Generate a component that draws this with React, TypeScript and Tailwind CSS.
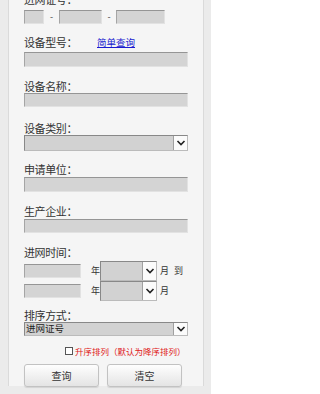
import React from "react";

const font = { fontFamily: '"Noto Sans CJK SC", "Noto Sans", sans-serif' };

const Chevron = () => (
  <svg width="10" height="8" viewBox="0 0 10 8">
    <polyline points="1.5,2 5,5.5 8.5,2" fill="none" stroke="#222" strokeWidth="1.6" />
  </svg>
);

const TextInput = ({ className }: { className: string }) => (
  <div
    className={`bg-[#d4d4d4] border border-t-[#959595] border-l-[#a5a5a5] border-b-[#e2e2e2] border-r-[#e2e2e2] ${className}`}
  />
);

const Select = ({ className, text }: { className: string; text?: string }) => (
  <div
    className={`flex bg-[#d2d2d2] border border-t-[#888] border-l-[#888] border-b-[#bbb] border-r-[#bbb] ${className}`}
  >
    <div className="flex-1 flex items-center pl-[1px] text-[9.5px] text-[#222] leading-none">{text}</div>
    <div className="w-[14px] flex items-center justify-center bg-[#fbfbfb] border-l border-[#a0a0a0]">
      <Chevron />
    </div>
  </div>
);

const Label = ({ children, className }: { children: React.ReactNode; className: string }) => (
  <div className={`h-[14px] leading-[14px] text-[11px] tracking-[-0.4px] text-[#333] ${className}`}>{children}</div>
);

export default function App() {
  return (
    <div className="w-[211px] h-[394px] overflow-hidden bg-[#ebebeb]" style={font}>
      <div className="ml-[8px] w-[196px] h-full border-x border-[#dadada] bg-[#f5f5f5] pl-[15px]">
        <Label className="-mt-[8px]">进网证号：</Label>

        <div className="mt-[4px] flex items-center h-[14px]">
          <TextInput className="w-[20px] h-[14px]" />
          <span className="w-[15px] text-center text-[9px] text-[#444]">-</span>
          <TextInput className="w-[43px] h-[14px]" />
          <span className="w-[14px] text-center text-[9px] text-[#444]">-</span>
          <TextInput className="w-[49px] h-[14px]" />
        </div>

        <Label className="mt-[11px] flex">
          <span className="w-[73px]">设备型号：</span>
          <a href="#" className="text-[9.5px] tracking-normal text-[#1a1ad0] underline">简单查询</a>
        </Label>
        <TextInput className="mt-[3px] w-[164px] h-[15px]" />

        <Label className="mt-[12px]">设备名称：</Label>
        <TextInput className="w-[164px] h-[14px]" />

        <Label className="mt-[14px]">设备类别：</Label>
        <Select className="w-[164px] h-[16px]" />

        <Label className="mt-[11px]">申请单位：</Label>
        <TextInput className="mt-[1px] w-[164px] h-[15px]" />

        <Label className="mt-[12px]">生产企业：</Label>
        <TextInput className="mt-[1px] w-[164px] h-[14px]" />

        <Label className="mt-[12px]">进网时间：</Label>
        <div className="mt-[2px] flex items-center h-[20px] text-[9px] text-[#333]">
          <TextInput className="w-[57px] h-[14px]" />
          <span className="ml-[10px] w-[9px]">年</span>
          <Select className="w-[57px] h-[20px]" />
          <span className="ml-[3px]">月</span>
          <span className="ml-[5px]">到</span>
        </div>
        <div className="flex items-center h-[20px] text-[9px] text-[#333]">
          <TextInput className="w-[57px] h-[14px]" />
          <span className="ml-[10px] w-[9px]">年</span>
          <Select className="w-[57px] h-[20px]" />
          <span className="ml-[3px]">月</span>
        </div>

        <Label className="mt-[7px]">排序方式：</Label>
        <Select className="w-[164px] h-[14px]" text="进网证号" />

        <div className="mt-[8px] h-[14px] flex items-center pl-[41px]">
          <div className="w-[8px] h-[8px] border border-[#555] bg-white" />
          <span className="ml-[2px] text-[8.5px] text-[#e01818] whitespace-nowrap">升序排列（默认为降序排列）</span>
        </div>

        <div className="mt-[6px] flex gap-[8px]">
          {["查询", "清空"].map((t) => (
            <button
              key={t}
              className="w-[75px] h-[23px] rounded-[3px] border border-[#c2c2c2] bg-gradient-to-b from-[#fefefe] to-[#e4e4e4] text-[10px] text-[#333] shadow-[0_1px_1px_rgba(0,0,0,0.1)]"
            >
              {t}
            </button>
          ))}
        </div>
      </div>
    </div>
  );
}
